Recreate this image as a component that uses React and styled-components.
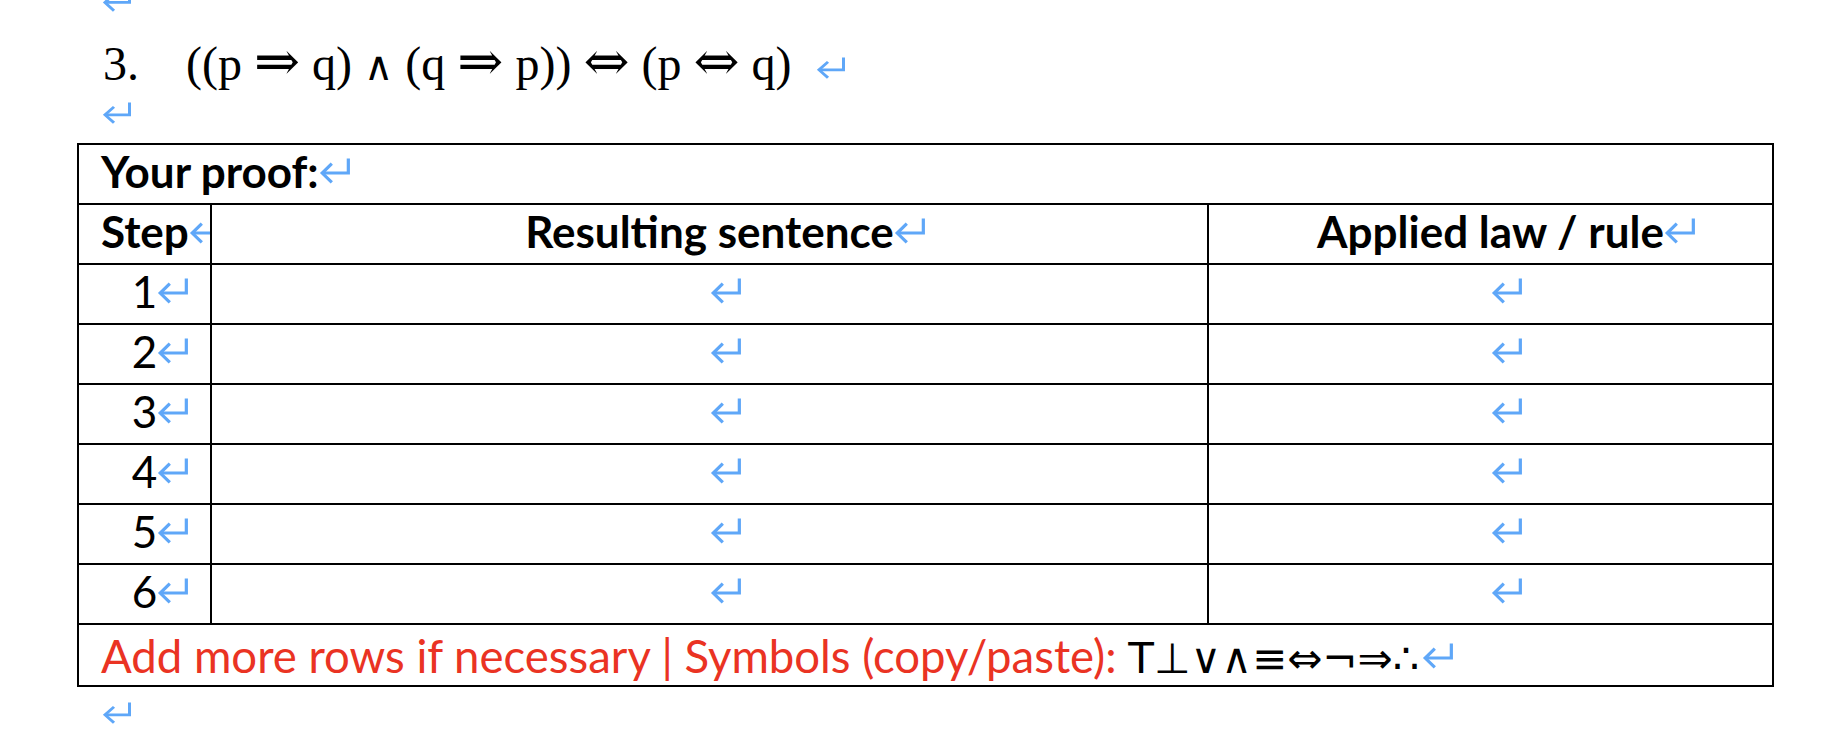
import React from "react";
import styled, { createGlobalStyle } from "styled-components";

const GlobalStyle = createGlobalStyle`
  html, body {
    margin: 0;
    padding: 0;
    background: #fff;
  }
  body {
    width: 1836px;
    height: 754px;
    overflow: hidden;
  }
`;

const MARK_BLUE = "#5fa7f8";

const Page = styled.div`
  padding-left: 77px;
  color: #000;
`;

const TopLine = styled.div`
  height: 13px;
  padding-left: 25px;
  display: flex;
  align-items: flex-end;
  overflow: hidden;
`;

const Heading = styled.div`
  margin-top: 24px;
  height: 48px;
  padding-left: 26px;
  display: flex;
  align-items: baseline;
  font-family: "Liberation Serif", "DejaVu Serif", serif;
  font-size: 48px;
  line-height: 48px;
  white-space: nowrap;
`;

const Num = styled.span`
  display: inline-block;
  width: 83px;
`;

const Op = styled.span`
  font-family: "DejaVu Serif", serif;
  font-size: ${(p) => p.$size || 55}px;
  line-height: 48px;
  font-weight: 400;
`;

const BlankLine = styled.div`
  height: ${(p) => p.$h}px;
  padding-top: ${(p) => p.$top}px;
  padding-left: 25px;
  box-sizing: border-box;
  display: flex;
  align-items: flex-start;
`;

const Frame = styled.div`
  display: grid;
  grid-template-columns: 131px 995px 563px;
  grid-template-rows: repeat(8, 58px) 60px;
  gap: 2px;
  width: max-content;
  background: #000;
  border: 2px solid #000;
  font-family: Lato, "Open Sans", sans-serif;
  font-size: 44px;
  line-height: 47px;
`;

const Cell = styled.div`
  background: #fff;
  overflow: hidden;
  white-space: nowrap;
  box-sizing: border-box;
  padding: ${(p) => (p.$top ?? 3)}px 0 0 ${(p) => (p.$left ?? 0)}px;
  text-align: ${(p) => p.$align || "left"};
  font-weight: ${(p) => (p.$bold ? 700 : 400)};
  grid-column: ${(p) => (p.$span ? "1 / -1" : "auto")};
`;

const Red = styled.span`
  color: #ea3323;
  font-size: 45.5px;
`;

const Symbols = styled.span`
  font-family: "DejaVu Sans", sans-serif;
  font-size: 42px;
  color: #000;
`;

const MarkSvg = styled.svg`
  display: inline-block;
  flex: none;
  vertical-align: ${(p) => p.$lift}px;
  margin-left: ${(p) => p.$gap}px;
  margin-right: ${(p) => (p.$hang ? -p.$w - p.$gap : 0)}px;
`;

function Mark({ w = 32, h = 27, lift = 3, gap = 0, hang = false }) {
  return (
    <MarkSvg
      width={w}
      height={h}
      viewBox="0 0 30 26"
      preserveAspectRatio="none"
      fill="none"
      stroke={MARK_BLUE}
      strokeWidth="3"
      $w={w}
      $lift={lift}
      $gap={gap}
      $hang={hang}
    >
      <path d="M27.5 0.5V14.5H3" />
      <path d="M12 5.5L3 14.5L12 23.5" />
    </MarkSvg>
  );
}

const steps = [1, 2, 3, 4, 5, 6];

export default function App() {
  return (
    <Page>
      <GlobalStyle />
      <TopLine>
        <Mark w={30} h={24} />
      </TopLine>

      <Heading>
        <Num>3.</Num>
        <span>
          ((p <Op>⇒</Op> q) <Op $size={40}>∧</Op> (q <Op>⇒</Op> p)){" "}
          <Op>⇔</Op> (p <Op>⇔</Op> q)
        </span>
        <Mark w={30} h={23} gap={24} lift={6} />
      </Heading>

      <BlankLine $h={58} $top={17}>
        <Mark w={30} h={23} />
      </BlankLine>

      <Frame>
        <Cell $span $bold $left={22}>
          Your proof:
          <Mark />
        </Cell>

        <Cell $bold $left={22}>
          Step
          <Mark />
        </Cell>
        <Cell $bold $align="center">
          Resulting sentence
          <Mark hang />
        </Cell>
        <Cell $bold $align="center">
          Applied law / rule
          <Mark hang />
        </Cell>

        {steps.map((n) => (
          <React.Fragment key={n}>
            <Cell $align="center">
              {n}
              <Mark hang />
            </Cell>
            <Cell $align="center">
              <Mark hang />
            </Cell>
            <Cell $align="center">
              <Mark hang />
            </Cell>
          </React.Fragment>
        ))}

        <Cell $span $left={22} $top={7}>
          <Red>Add more rows if necessary | Symbols (copy/paste): </Red>
          <Symbols>T⊥∨∧≡⇔¬⇒∴</Symbols>
          <Mark gap={3} />
        </Cell>
      </Frame>

      <BlankLine $h={40} $top={15}>
        <Mark w={30} h={23} />
      </BlankLine>
    </Page>
  );
}
